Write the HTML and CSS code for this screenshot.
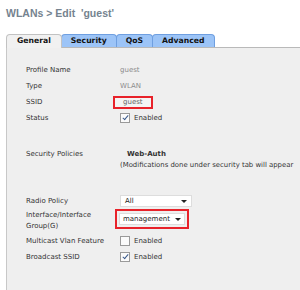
FILE: index.html
```html
<!DOCTYPE html>
<html lang="en">
<head>
    <meta charset="UTF-8">
    <title>WLANs &gt; Edit 'guest'</title>
    <link rel="stylesheet" href="styles.css">
</head>
<body>
    <h1 class="page-title">WLANs &gt; Edit &nbsp;'guest'</h1>

    <div class="tabs">
        <div class="tab active">General</div>
        <div class="tab">Security</div>
        <div class="tab">QoS</div>
        <div class="tab">Advanced</div>
    </div>

    <div class="panel">
        <div class="row">
            <div class="label">Profile Name</div>
            <div class="value muted">guest</div>
        </div>
        <div class="row">
            <div class="label">Type</div>
            <div class="value muted">WLAN</div>
        </div>
        <div class="row">
            <div class="label">SSID</div>
            <div class="value"><span class="boxed ssid">guest</span></div>
        </div>
        <div class="row">
            <div class="label">Status</div>
            <div class="value"><span class="check checked"></span>Enabled</div>
        </div>

        <div class="row policies">
            <div class="label">Security Policies</div>
            <div class="value">
                <div class="policy-name">Web-Auth</div>
                <div class="note">(Modifications done under security tab will appear</div>
            </div>
        </div>

        <div class="row radio">
            <div class="label">Radio Policy</div>
            <div class="value"><span class="select wide">All<span class="arrow"></span></span></div>
        </div>
        <div class="row iface">
            <div class="label">Interface/Interface<br>Group(G)</div>
            <div class="value"><span class="boxed red-select"><span class="select">management<span class="arrow"></span></span></span></div>
        </div>
        <div class="row">
            <div class="label">Multicast Vlan Feature</div>
            <div class="value"><span class="check"></span>Enabled</div>
        </div>
        <div class="row">
            <div class="label">Broadcast SSID</div>
            <div class="value"><span class="check checked"></span>Enabled</div>
        </div>
    </div>
</body>
</html>
```

FILE: styles.css
```css
html, body {
    height: 100%;
}
body {
    margin: 0;
    background: #ffffff;
    font-family: "DejaVu Sans", Verdana, sans-serif;
    font-size: 7px;
    color: #333333;
    overflow: hidden;
    display: flex;
    flex-direction: column;
}
.page-title {
    margin: 0;
    padding: 7px 0 0 6px;
    height: 19px;
    font-family: "Liberation Sans", Arial, sans-serif;
    font-size: 10.5px;
    font-weight: bold;
    color: #75838f;
    white-space: pre;
}
.tabs {
    display: flex;
    padding-left: 6px;
    margin-top: 8px;
    height: 13px;
}
.tab {
    box-sizing: border-box;
    height: 13px;
    padding: 1px 9px 0;
    margin-right: -1px;
    background: #9cc4f7;
    border: 1px solid #6f9fe0;
    border-bottom: none;
    border-radius: 4px 4px 0 0;
    font-size: 7.7px;
    font-weight: bold;
    color: #111111;
}
.tab.active {
    background: #f1f1f1;
    border-color: #c2c2c2;
    height: 14px;
    margin-bottom: -1px;
    position: relative;
    padding: 1px 10px 0;
}
.panel {
    flex: 1;
    margin-left: 6px;
    background: #efefef;
    border-top: 1px solid #b9b9b9;
    border-left: 1px solid #c8c8c8;
    padding: 14px 0 0 19px;
}
.row {
    display: grid;
    grid-template-columns: 94px 1fr;
    align-items: center;
    min-height: 16px;
}
.label {
    color: #333333;
    line-height: 11px;
}
.value {
    display: flex;
    align-items: center;
    white-space: nowrap;
}
.muted {
    color: #8c8c8c;
}
.boxed {
    border: 2px solid #e8222a;
}
.ssid {
    margin-left: -7px;
    padding: 0 8px;
    line-height: 9px;
    color: #666666;
    background: #f4f4f4;
}
.check {
    box-sizing: border-box;
    width: 10px;
    height: 10px;
    border: 1px solid #9a9a9a;
    background: #fbfbfb;
    margin-right: 4px;
    position: relative;
}
.check.checked::after {
    content: "";
    position: absolute;
    left: 3px;
    top: 0;
    width: 2px;
    height: 5px;
    border: solid #3a5a8c;
    border-width: 0 1.5px 1.5px 0;
    transform: rotate(40deg);
}
.policies {
    margin-top: 23px;
    align-items: start;
}
.policy-name {
    font-weight: bold;
    margin-left: 7px;
    line-height: 11px;
}
.note {
    line-height: 11px;
    font-size: 6.9px;
}
.policies .value {
    display: block;
}
.radio {
    margin-top: 22px;
}
.select {
    box-sizing: border-box;
    display: inline-flex;
    align-items: center;
    justify-content: space-between;
    height: 12px;
    padding: 0 3px;
    background: #ffffff;
    border: 1px solid #dddddd;
    color: #222222;
}
.select.wide {
    width: 72px;
    padding: 0 4px;
}
.arrow {
    width: 0;
    height: 0;
    margin-left: 5px;
    border-left: 3px solid transparent;
    border-right: 3px solid transparent;
    border-top: 3px solid #222222;
}
.red-select {
    margin-left: -5px;
    padding: 2px 2px;
    display: inline-flex;
}
.iface {
    min-height: 24px;
}
.iface .value {
    align-self: start;
}
```
